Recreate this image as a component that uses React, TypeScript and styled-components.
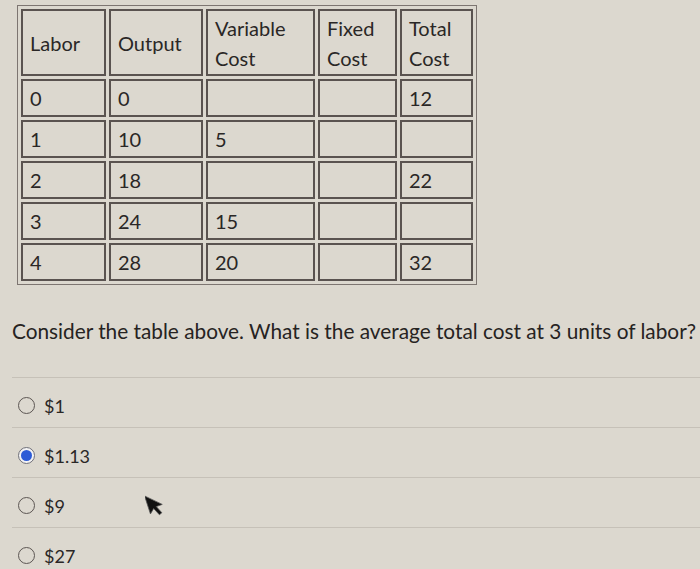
import React from "react";
import styled, { createGlobalStyle } from "styled-components";

const Global = createGlobalStyle`
  html, body { margin: 0; padding: 0; background: #dcd8cf; }
  body { font-family: Lato, "Open Sans", "Liberation Sans", sans-serif; color: #2e2b2a; }
  * { box-sizing: border-box; }
`;

const Page = styled.div`
  position: relative;
  width: 700px;
  height: 569px;
  overflow: hidden;
  padding: 5px 0 0 0;
  background: #dcd8cf;
`;

const Table = styled.table`
  margin-left: 17px;
  border: 1px solid #7d7571;
  border-collapse: separate;
  border-spacing: 3px;
  font-size: 20px;
`;

const HeadCell = styled.th<{ $w: number }>`
  width: ${(p) => p.$w}px;
  height: 67px;
  border: 2px solid #5a5350;
  padding: 0 0 0 7px;
  text-align: left;
  vertical-align: middle;
  font-weight: 400;
  line-height: 30px;
  color: #2a2726;
`;

const Cell = styled.td`
  height: 38px;
  border: 2px solid #5a5350;
  padding: 0 0 0 7px;
  vertical-align: middle;
  line-height: 20px;
  color: #2a2726;
`;

const Question = styled.p`
  margin: 31px 0 0 12px;
  font-size: 20.8px;
  line-height: 30px;
  white-space: nowrap;
  color: #262322;
`;

const Options = styled.div`
  margin: 31px 0 0 12px;
`;

const Option = styled.div`
  height: 50px;
  border-top: 1px solid #c6c1b8;
  display: flex;
  align-items: center;
  gap: 9px;
  padding: 6px 0 0 6px;
  font-size: 18px;
  color: #2a2726;
`;

const Radio = styled.span<{ $on?: boolean }>`
  width: 17px;
  height: 17px;
  border-radius: 50%;
  border: 1.5px solid ${(p) => (p.$on ? "#6f6f78" : "#5c5653")};
  background: ${(p) => (p.$on ? "#f2f2f4" : "transparent")};
  display: flex;
  align-items: center;
  justify-content: center;
  flex: none;
`;

const Dot = styled.span`
  width: 11px;
  height: 11px;
  border-radius: 50%;
  background: #2d5bd6;
`;

const Cursor = styled.svg`
  position: absolute;
  left: 145px;
  top: 492px;
`;

const heads: { t: React.ReactNode; w: number }[] = [
  { t: "Labor", w: 85 },
  { t: "Output", w: 94 },
  { t: <>Variable<br />Cost</>, w: 109 },
  { t: <>Fixed<br />Cost</>, w: 79 },
  { t: <>Total<br />Cost</>, w: 73 },
];

const rows = [
  ["0", "0", "", "", "12"],
  ["1", "10", "5", "", ""],
  ["2", "18", "", "", "22"],
  ["3", "24", "15", "", ""],
  ["4", "28", "20", "", "32"],
];

const opts = [
  { label: "$1", on: false },
  { label: "$1.13", on: true },
  { label: "$9", on: false },
  { label: "$27", on: false },
];

export default function App() {
  return (
    <Page>
      <Global />
      <Table>
        <thead>
          <tr>
            {heads.map((h, i) => (
              <HeadCell key={i} $w={h.w}>{h.t}</HeadCell>
            ))}
          </tr>
        </thead>
        <tbody>
          {rows.map((r, i) => (
            <tr key={i}>
              {r.map((c, j) => (
                <Cell key={j}>{c}</Cell>
              ))}
            </tr>
          ))}
        </tbody>
      </Table>
      <Question>Consider the table above. What is the average total cost at 3 units of labor?</Question>
      <Options>
        {opts.map((o) => (
          <Option key={o.label}>
            <Radio $on={o.on}>{o.on && <Dot />}</Radio>
            <span>{o.label}</span>
          </Option>
        ))}
      </Options>
      <Cursor width="20" height="26" viewBox="0 0 16 22">
        <path d="M2 1 L2 17 L6 13.5 L9 20 L11.5 19 L8.6 12.6 L14 12.4 Z" fill="#111" stroke="#555" strokeWidth="0.6" transform="rotate(-18 8 11)" />
      </Cursor>
    </Page>
  );
}
